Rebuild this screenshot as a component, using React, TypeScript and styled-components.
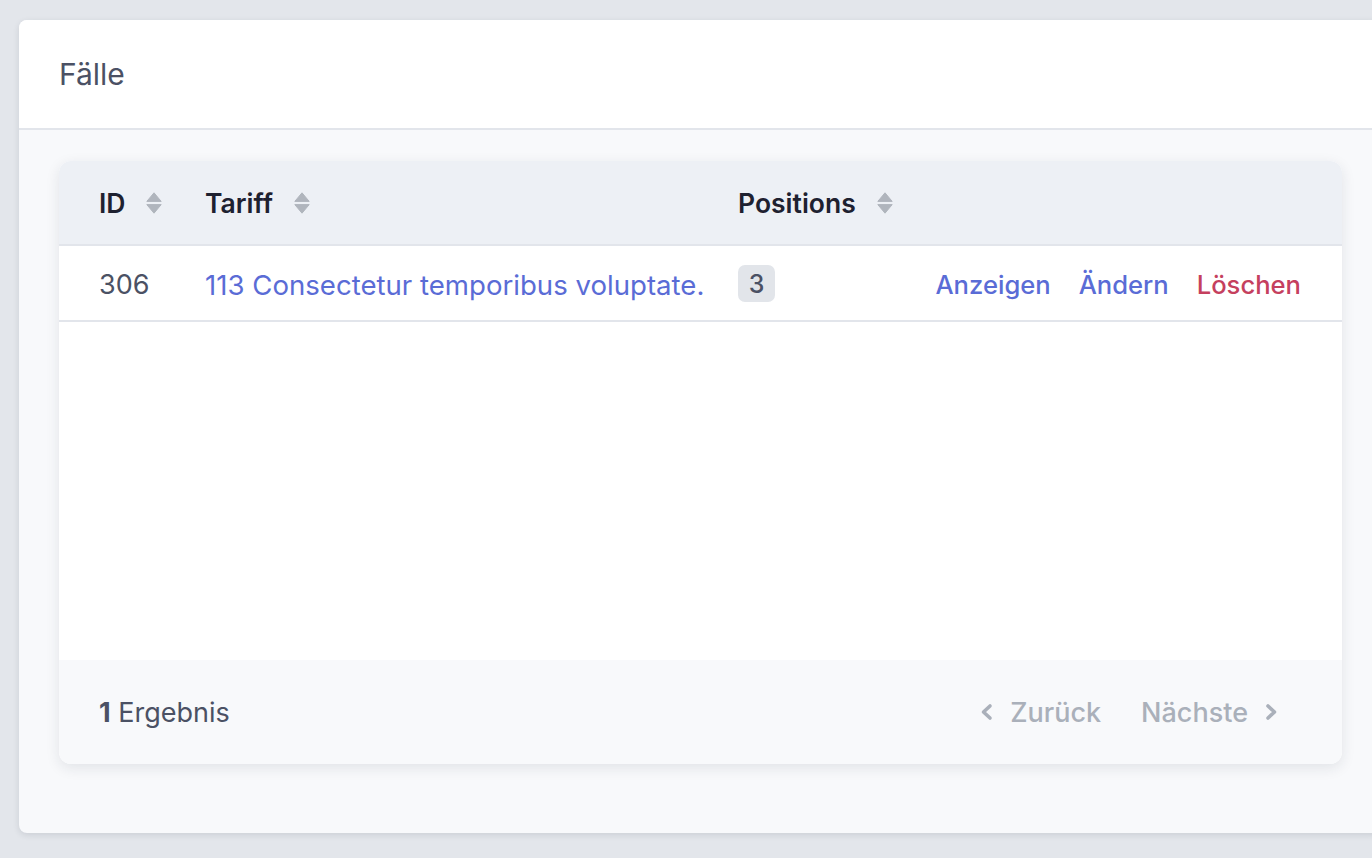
import React from "react";
import styled, { createGlobalStyle } from "styled-components";

const GlobalStyle = createGlobalStyle`
  html, body {
    margin: 0;
    padding: 0;
    background: #e3e6eb;
    font-family: Inter, "Noto Sans", "Liberation Sans", sans-serif;
    overflow: hidden;
  }
`;

const Page = styled.div`
  width: 1372px;
  height: 858px;
  overflow: hidden;
  padding: 20px 0 0 19px;
  box-sizing: border-box;
`;

const Panel = styled.section`
  width: 1363px;
  background: #f8f9fb;
  border-radius: 8px;
  box-shadow: 0 2px 6px rgba(30, 40, 60, 0.12);
  overflow: hidden;
`;

const PanelHeader = styled.header`
  height: 108px;
  display: flex;
  align-items: center;
  padding: 0 40px;
  background: #fff;
  border-bottom: 2px solid #e2e5eb;
`;

const Title = styled.h1`
  margin: 0;
  font-size: 30px;
  font-weight: 400;
  color: #4b5164;
`;

const PanelBody = styled.div`
  padding: 31px 40px 69px 40px;
`;

const Card = styled.div`
  width: 1283px;
  background: #fff;
  border-radius: 12px;
  box-shadow: 0 4px 14px rgba(30, 40, 60, 0.1);
  overflow: hidden;
`;

const TableArea = styled.div`
  min-height: 499px;
`;

const Row = styled.div<{ $head?: boolean }>`
  display: grid;
  grid-template-columns: 106px 533px 1fr auto;
  align-items: center;
  box-sizing: border-box;
  height: ${(p) => (p.$head ? 85 : 76)}px;
  padding: ${(p) => (p.$head ? "0" : "3px")} 41px 0 40px;
  background: ${(p) => (p.$head ? "#edf0f5" : "#fff")};
  border-bottom: 2px solid #e2e5eb;
  font-size: 27px;
`;

const HeadCell = styled.div`
  display: flex;
  align-items: center;
  gap: 21px;
  font-weight: 600;
  font-size: 26.5px;
  color: #1e2130;
`;

const Cell = styled.div`
  color: #4b5164;
`;

const TariffLink = styled.a`
  color: #5a6cd6;
  font-size: 27.6px;
  text-decoration: none;
`;

const Badge = styled.span`
  display: inline-flex;
  align-items: center;
  justify-content: center;
  width: 37px;
  height: 37px;
  margin-top: -3px;
  border-radius: 7px;
  background: #e2e5ea;
  color: #4b5164;
  font-weight: 500;
  font-size: 25px;
`;

const Actions = styled.div`
  display: flex;
  gap: 28px;
`;

const Action = styled.a<{ $danger?: boolean }>`
  color: ${(p) => (p.$danger ? "#c5405e" : "#5a6cd6")};
  font-weight: 500;
  font-size: 25.6px;
  text-decoration: none;
`;

const Footer = styled.div`
  height: 104px;
  display: flex;
  align-items: center;
  justify-content: space-between;
  padding: 0 44px 0 40px;
  background: #f8f9fb;
  font-size: 27px;
  color: #4b5164;
`;

const Count = styled.div`
  b {
    font-weight: 700;
  }
`;

const Pager = styled.div`
  display: flex;
`;

const PageButton = styled.span`
  display: flex;
  align-items: center;
  gap: 16px;
  padding: 0 20px;
  color: #aab0ba;
  font-weight: 500;
`;

const SortIcon = () => (
  <svg width="16" height="22" viewBox="0 0 16 22">
    <path d="M8 0.8 L15.2 9.4 H0.8 Z" fill="#b0b5bd" strokeLinejoin="round" stroke="#b0b5bd" strokeWidth="1" />
    <path d="M8 21.2 L15.2 12.6 H0.8 Z" fill="#b0b5bd" strokeLinejoin="round" stroke="#b0b5bd" strokeWidth="1" />
  </svg>
);

const Chevron = ({ dir }: { dir: "left" | "right" }) => (
  <svg width="14" height="18" viewBox="0 0 14 18">
    <polyline
      points={dir === "left" ? "10,3 3.5,9 10,15" : "4,3 10.5,9 4,15"}
      fill="none"
      stroke="#aab0ba"
      strokeWidth="3.6"
      strokeLinecap="round"
      strokeLinejoin="round"
    />
  </svg>
);

export default function App() {
  return (
    <Page>
      <GlobalStyle />
      <Panel>
        <PanelHeader>
          <Title>Fälle</Title>
        </PanelHeader>
        <PanelBody>
          <Card>
            <TableArea>
              <Row $head>
                <HeadCell>
                  ID <SortIcon />
                </HeadCell>
                <HeadCell>
                  Tariff <SortIcon />
                </HeadCell>
                <HeadCell>
                  Positions <SortIcon />
                </HeadCell>
                <div />
              </Row>
              <Row>
                <Cell>306</Cell>
                <Cell>
                  <TariffLink href="#">113 Consectetur temporibus voluptate.</TariffLink>
                </Cell>
                <Cell>
                  <Badge>3</Badge>
                </Cell>
                <Actions>
                  <Action href="#">Anzeigen</Action>
                  <Action href="#">Ändern</Action>
                  <Action href="#" $danger>
                    Löschen
                  </Action>
                </Actions>
              </Row>
            </TableArea>
            <Footer>
              <Count>
                <b>1</b> Ergebnis
              </Count>
              <Pager>
                <PageButton>
                  <Chevron dir="left" />
                  Zurück
                </PageButton>
                <PageButton>
                  Nächste
                  <Chevron dir="right" />
                </PageButton>
              </Pager>
            </Footer>
          </Card>
        </PanelBody>
      </Panel>
    </Page>
  );
}
